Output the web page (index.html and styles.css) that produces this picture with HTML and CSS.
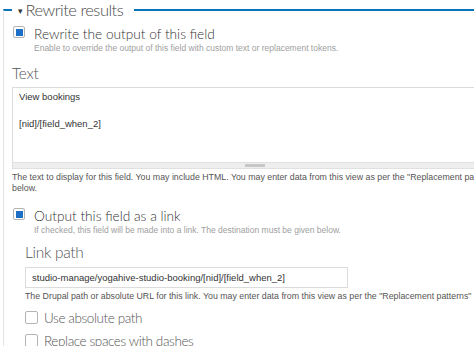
FILE: index.html
```html
<!DOCTYPE html>
<html lang="en">
<head>
    <meta charset="UTF-8">
    <title>Rewrite results</title>
    <link rel="stylesheet" href="styles.css">
</head>
<body>
    <fieldset class="views-fieldset">
        <legend><span class="arrow">&#9662;</span>Rewrite results</legend>

        <div class="form-item form-checkbox first">
            <span class="box checked"></span>
            <div>
                <label>Rewrite the output of this field</label>
                <div class="description">Enable to override the output of this field with custom text or replacement tokens.</div>
            </div>
        </div>

        <div class="form-item">
            <label class="field-label">Text</label>
            <div class="textarea">View bookings<br><br>[nid]/[field_when_2]</div>
            <div class="grippie"><span></span></div>
            <div class="description dark">The text to display for this field. You may include HTML. You may enter data from this view as per the "Replacement patterns" below.</div>
        </div>

        <div class="form-item form-checkbox second">
            <span class="box checked"></span>
            <div>
                <label>Output this field as a link</label>
                <div class="description">If checked, this field will be made into a link. The destination must be given below.</div>
            </div>
        </div>

        <!-- dependent options -->
        <div class="subform">
            <div class="form-item">
                <label class="field-label">Link path</label>
                <div class="textfield">studio-manage/yogahive-studio-booking/[nid]/[field_when_2]</div>
                <div class="description dark">The Drupal path or absolute URL for this link. You may enter data from this view as per the "Replacement patterns" below.</div>
            </div>

            <div class="form-item form-checkbox big">
                <span class="box"></span>
                <label>Use absolute path</label>
            </div>

            <div class="form-item form-checkbox big">
                <span class="box"></span>
                <label>Replace spaces with dashes</label>
            </div>
        </div>
    </fieldset>
</body>
</html>
```

FILE: styles.css
```css
* {
    box-sizing: border-box;
}

body {
    margin: 0;
    background: #fff;
    overflow: hidden;
    font-family: 'Liberation Sans', Arial, sans-serif;
    color: #333;
}

.views-fieldset {
    margin: 0 0 0 3px;
    padding: 0 0 0 8px;
    width: 512px;
    min-width: 0;
    border: none;
    border-top: 2px solid #0a74bb;
    border-left: 1px solid #e4e4e4;
}

legend {
    height: 20px;
    padding: 0 11px 0 6px;
    font-family: 'Lato', sans-serif;
    font-weight: 300;
    font-size: 16.5px;
    letter-spacing: -0.5px;
    line-height: 20px;
    color: #4a4a4a;
    white-space: nowrap;
}

legend .arrow {
    font-size: 9px;
    margin-right: 3px;
    color: #333;
    vertical-align: 2px;
}

.form-checkbox {
    display: flex;
    align-items: flex-start;
    gap: 9px;
    margin-left: 1px;
}

.form-checkbox.first {
    margin-top: 5px;
}

.form-checkbox.second {
    margin-top: 13px;
}

.form-checkbox label {
    font-family: 'Lato', sans-serif;
    font-weight: 300;
    font-size: 13.7px;
    line-height: 16px;
    color: #333;
}

.box {
    flex: none;
    width: 12px;
    height: 12px;
    margin-top: 1px;
    border: 1px solid #b4b4b4;
    border-radius: 2px;
    background: #fff;
    display: flex;
    align-items: center;
    justify-content: center;
}

.box.checked::after {
    content: "";
    width: 7px;
    height: 7px;
    background: #1c6fc4;
}

.description {
    font-size: 8.5px;
    line-height: 11px;
    color: #a0a0a0;
}

.description.dark {
    font-size: 8.8px;
    color: #555;
    margin-top: 3px;
}

.field-label {
    display: block;
    font-family: 'Lato', sans-serif;
    font-weight: 300;
    font-size: 15.5px;
    letter-spacing: -0.3px;
    line-height: 20px;
    color: #555;
    margin: 9px 0 4px;
}

.textarea {
    width: 486px;
    height: 75px;
    padding: 2px 6px;
    border: 1px solid #dcdcdc;
    border-bottom: none;
    font-size: 9.5px;
    line-height: 13.5px;
    color: #333;
}

.grippie {
    width: 486px;
    height: 7px;
    background: #eee;
    border: 1px solid #e0e0e0;
    display: flex;
    justify-content: center;
    align-items: center;
}

.grippie span {
    width: 20px;
    height: 3px;
    background: #c8c8c8;
}

.subform {
    margin-left: 13px;
}

.subform .field-label {
    margin: 6px 0 5px;
}

.textfield {
    width: 323px;
    height: 21px;
    padding: 0 6px;
    border: 1px solid #dcdcdc;
    font-size: 9.5px;
    line-height: 19px;
    color: #333;
    white-space: nowrap;
}

.subform .description.dark {
    margin-top: 3px;
    white-space: nowrap;
}

.big {
    margin-left: 0;
    gap: 6px;
    margin-top: 7px;
}

.big + .big {
    margin-top: 5px;
}

.big .box {
    width: 13px;
    height: 13px;
    margin-top: 2px;
}

.big label {
    font-size: 13.5px;
    letter-spacing: -0.4px;
    line-height: 18px;
    color: #555;
}
```
